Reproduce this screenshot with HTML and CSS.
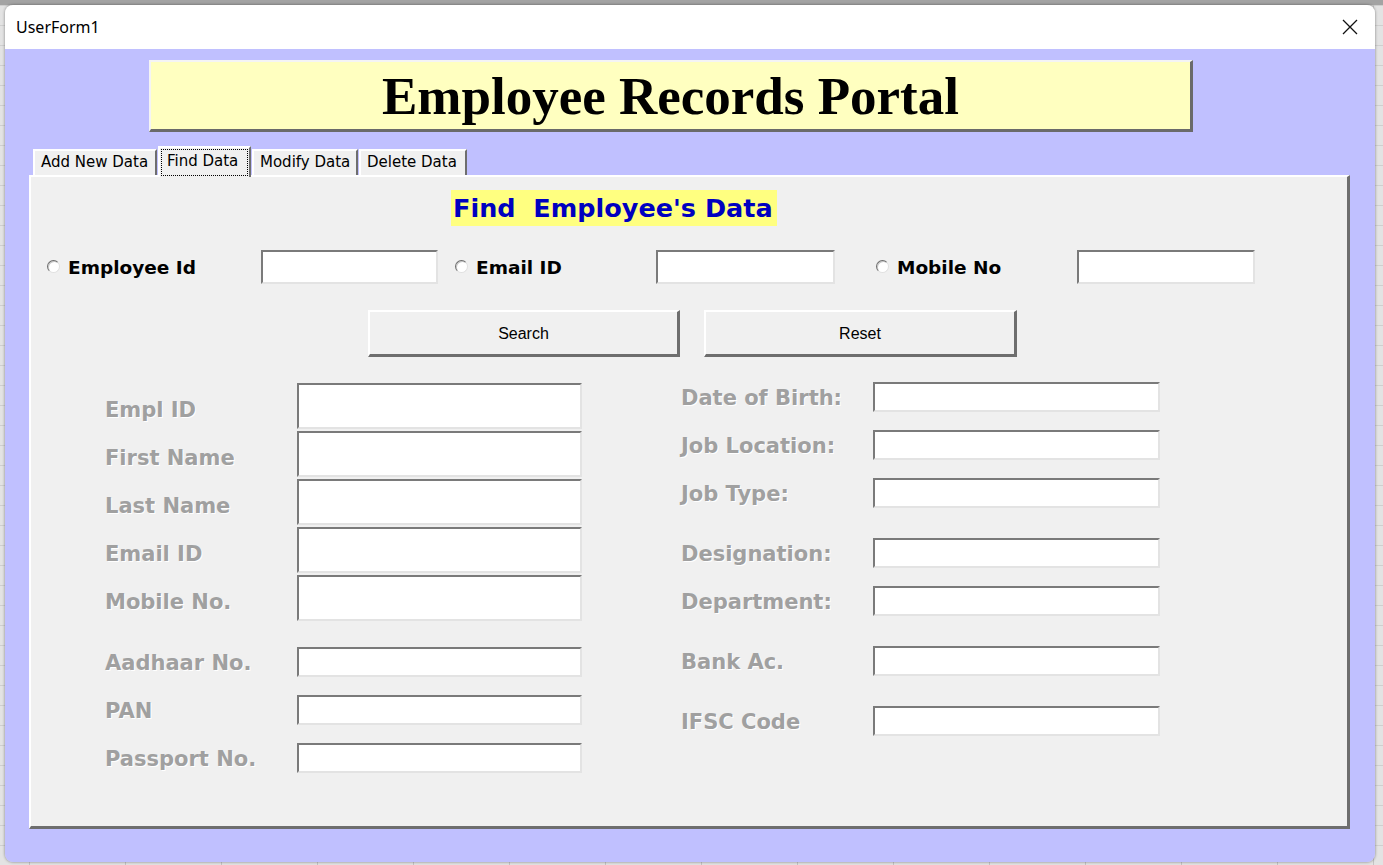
FILE: index.html
```html
<!DOCTYPE html>
<html lang="en">

<head>
  <meta charset="UTF-8">
  <meta name="viewport" content="width=device-width, initial-scale=1.0">
  <title>UserForm1</title>
  <link rel="stylesheet" href="styles.css">
</head>

<body>
  <div class="window">
    <div class="titlebar">
      <span class="title">UserForm1</span>
      <svg class="close" width="16" height="16" viewBox="0 0 16 16">
        <path d="M1 1L15 15M15 1L1 15" stroke="#111" stroke-width="1.3" fill="none" />
      </svg>
    </div>

    <div class="client">
      <div class="banner">Employee Records Portal</div>

      <div class="tabs">
        <div class="tab tab-add">Add New Data</div>
        <div class="tab tab-find active"><span>Find Data</span></div>
        <div class="tab tab-modify">Modify Data</div>
        <div class="tab tab-delete">Delete Data</div>
      </div>

      <div class="page">
        <div class="heading"><span>Find&nbsp; Employee's Data</span></div>

        <div class="search-row">
          <div class="opt opt-first"><span class="radio"></span><span class="opt-label">Employee Id</span></div>
          <div class="textbox box-search box-1"></div>
          <div class="opt opt-second"><span class="radio"></span><span class="opt-label">Email ID</span></div>
          <div class="textbox box-search box-2"></div>
          <div class="opt opt-third"><span class="radio"></span><span class="opt-label">Mobile No</span></div>
          <div class="textbox box-search box-3"></div>
        </div>

        <div class="buttons">
          <button class="btn btn-search">Search</button>
          <button class="btn btn-reset">Reset</button>
        </div>

        <div class="fields">
          <div class="col col-left">
            <div class="field tall"><label>Empl ID</label><div class="textbox"></div></div>
            <div class="field tall"><label>First Name</label><div class="textbox"></div></div>
            <div class="field tall"><label>Last Name</label><div class="textbox"></div></div>
            <div class="field tall"><label>Email ID</label><div class="textbox"></div></div>
            <div class="field tall"><label>Mobile No.</label><div class="textbox"></div></div>
            <div class="field gap-md"><label>Aadhaar No.</label><div class="textbox"></div></div>
            <div class="field"><label>PAN</label><div class="textbox"></div></div>
            <div class="field"><label>Passport No.</label><div class="textbox"></div></div>
          </div>

          <div class="col col-right">
            <div class="field"><label>Date of Birth:</label><div class="textbox"></div></div>
            <div class="field"><label>Job Location:</label><div class="textbox"></div></div>
            <div class="field"><label>Job Type:</label><div class="textbox"></div></div>
            <div class="field gap-lg"><label>Designation:</label><div class="textbox"></div></div>
            <div class="field"><label>Department:</label><div class="textbox"></div></div>
            <div class="field gap-lg"><label>Bank Ac.</label><div class="textbox"></div></div>
            <div class="field gap-lg"><label>IFSC Code</label><div class="textbox"></div></div>
          </div>
        </div>
      </div>
    </div>
  </div>
</body>

</html>
```

FILE: styles.css
```css
* {
  box-sizing: border-box;
  margin: 0;
  padding: 0;
}

body {
  width: 1383px;
  height: 865px;
  overflow: hidden;
  font-family: 'DejaVu Sans', sans-serif;
  background-color: #e3e3e3;
  background-image:
    linear-gradient(#a3a3a3, #a3a3a3),
    repeating-linear-gradient(90deg, transparent 0, transparent 29px, #c4c4c4 29px, #c4c4c4 30px, transparent 30px, transparent 96px),
    repeating-linear-gradient(0deg, transparent 0, transparent 19px, #cfcfcf 19px, #cfcfcf 20px);
  background-size: 100% 5px, 100% 100%, 100% 100%;
  background-repeat: no-repeat, repeat, repeat;
  padding: 5px 0 0 5px;
}

.window {
  width: 1370px;
  height: 857px;
  border-radius: 8px;
  overflow: hidden;
  box-shadow: 0 0 3px rgba(0, 0, 0, 0.45);
  display: flex;
  flex-direction: column;
}

.titlebar {
  height: 44px;
  flex: 0 0 44px;
  background: #fff;
  display: flex;
  align-items: center;
  justify-content: space-between;
  padding: 0 17px 0 11px;
}

.titlebar .title {
  font-family: 'Noto Sans', sans-serif;
  font-size: 16px;
  color: #000;
  margin-top: -1px;
}

.titlebar .close {
  display: block;
}

.client {
  flex: 1;
  background: #c0c0ff;
  padding-top: 11px;
}

/* header banner */
.banner {
  margin-left: 144px;
  width: 1044px;
  height: 72px;
  background: #ffffc0;
  border-style: solid;
  border-width: 2px 3px 3px 2px;
  border-color: #f4f4f4 #6a6a6a #6a6a6a #f4f4f4;
  font-family: 'Liberation Serif', 'Times New Roman', serif;
  font-weight: bold;
  font-size: 53px;
  line-height: 68px;
  text-align: center;
  color: #000;
}

/* tab strip */
.tabs {
  display: flex;
  align-items: flex-end;
  margin-top: 14px;
  margin-left: 28px;
  height: 29px;
}

.tab {
  height: 26px;
  background: #f0f0f0;
  border-style: solid;
  border-width: 2px 2px 0 2px;
  border-color: #fff #6e6e6e #fff #fff;
  font-size: 15px;
  line-height: 23px;
  padding-left: 6px;
  color: #000;
  white-space: nowrap;
}

.tab-add {
  width: 124px;
}

.tab-find {
  width: 93px;
}

.tab-modify {
  width: 106px;
  margin-left: 1px;
}

.tab-delete {
  width: 108px;
  margin-left: 1px;
}

.tab.active {
  height: 31px;
  margin-bottom: -2px;
  margin-left: 1px;
  position: relative;
  z-index: 1;
  padding: 1px 1px 0 1px;
  line-height: normal;
}

.tab.active span {
  display: block;
  height: 27px;
  border: 1px dotted #000;
  padding-left: 5px;
  line-height: 22px;
}

/* page */
.page {
  margin-left: 24px;
  width: 1321px;
  height: 654px;
  background: #f0f0f0;
  border-style: solid;
  border-width: 2px 3px 3px 2px;
  border-color: #fff #6e6e6e #6e6e6e #fff;
}

.heading {
  margin-top: 13px;
  margin-left: 420px;
  display: flex;
}

.heading span {
  display: block;
  background: #ffff80;
  color: #0000c0;
  font-weight: bold;
  font-size: 25.5px;
  height: 36px;
  line-height: 37px;
  padding: 0 2px;
  width: 326px;
}

.search-row {
  display: flex;
  align-items: center;
  height: 34px;
  margin-top: 24px;
  padding-left: 16px;
}

.opt {
  display: flex;
  align-items: center;
  height: 100%;
  padding-top: 1px;
}

.opt-first {
  width: 214px;
}

.opt-second {
  width: 201px;
  margin-left: 17px;
}

.opt-third {
  width: 201px;
  margin-left: 41px;
}

.radio {
  width: 13px;
  height: 13px;
  border-radius: 50%;
  border: 1px solid;
  border-color: #6c6c6c #e0e0e0 #e0e0e0 #6c6c6c;
  background: #fff;
  box-shadow: inset 1px 1px 0 #c8c8c8;
  margin-right: 8px;
  margin-top: -2px;
  flex: 0 0 13px;
}

.opt-label {
  font-weight: bold;
  font-size: 18.5px;
  color: #000;
}

.textbox {
  background: #fff;
  border-style: solid;
  border-width: 2px;
  border-color: #7a7a7a #e3e3e3 #e3e3e3 #7a7a7a;
}

.box-search {
  height: 34px;
}

.box-1 {
  width: 177px;
}

.box-2 {
  width: 179px;
}

.box-3 {
  width: 178px;
}

/* buttons */
.buttons {
  display: flex;
  gap: 24px;
  margin-top: 26px;
  margin-left: 337px;
}

.btn {
  height: 47px;
  background: #f0f0f0;
  border-style: solid;
  border-width: 2px 3px 3px 2px;
  border-color: #fff #6e6e6e #6e6e6e #fff;
  font-family: 'Liberation Sans', Arial, sans-serif;
  font-size: 16px;
  color: #000;
  padding-top: 1px;
}

.btn-search {
  width: 312px;
}

.btn-reset {
  width: 313px;
}

/* record fields */
.fields {
  display: flex;
  margin-top: 25px;
}

.col {
  display: flex;
  flex-direction: column;
}

.col-left {
  padding-left: 74px;
  padding-top: 1px;
}

.col-left .textbox {
  width: 285px;
}

.col-right {
  margin-left: 99px;
}

.col-right .textbox {
  width: 287px;
}

.field {
  display: flex;
  align-items: center;
  height: 30px;
  margin-top: 18px;
}

.field:first-child {
  margin-top: 0;
}

.field .textbox {
  height: 100%;
}

.field.tall {
  height: 46px;
  margin-top: 2px;
}

.field.tall:first-child {
  margin-top: 0;
}

.field.gap-md {
  margin-top: 26px;
}

.field.gap-lg {
  margin-top: 30px;
}

.field label {
  width: 192px;
  flex: 0 0 192px;
  font-weight: bold;
  font-size: 21px;
  color: #a0a0a0;
  text-shadow: 1px 1px 0 #fff;
  padding-top: 1px;
}

.field.tall label {
  padding-top: 7px;
}
```
